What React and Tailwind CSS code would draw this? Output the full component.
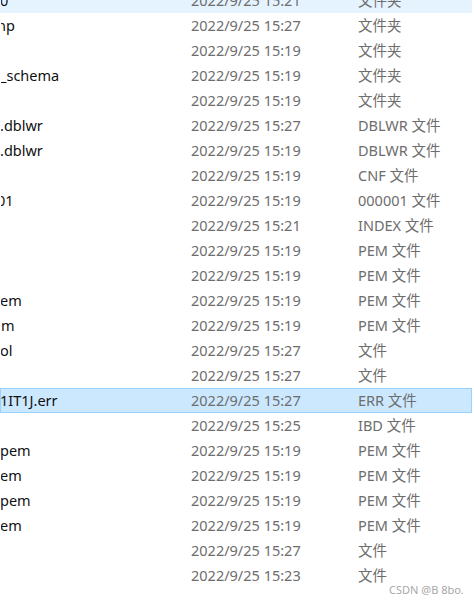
const rows = [
    { name: "0", time: "15:21", type: "文件夹", hover: true },
    { name: "np", time: "15:27", type: "文件夹", shift: true },
    { name: "", time: "15:19", type: "文件夹" },
    { name: "_schema", time: "15:19", type: "文件夹" },
    { name: "", time: "15:19", type: "文件夹" },
    { name: ".dblwr", time: "15:27", type: "DBLWR 文件" },
    { name: ".dblwr", time: "15:19", type: "DBLWR 文件" },
    { name: "", time: "15:19", type: "CNF 文件" },
    { name: "01", time: "15:19", type: "000001 文件", shift: true },
    { name: "", time: "15:21", type: "INDEX 文件" },
    { name: "", time: "15:19", type: "PEM 文件" },
    { name: "", time: "15:19", type: "PEM 文件" },
    { name: "em", time: "15:19", type: "PEM 文件" },
    { name: "m", time: "15:19", type: "PEM 文件", indent: true },
    { name: "ol", time: "15:27", type: "文件" },
    { name: "", time: "15:27", type: "文件" },
    { name: "1IT1J.err", time: "15:27", type: "ERR 文件", selected: true },
    { name: "", time: "15:25", type: "IBD 文件" },
    { name: "pem", time: "15:19", type: "PEM 文件" },
    { name: "em", time: "15:19", type: "PEM 文件" },
    { name: "pem", time: "15:19", type: "PEM 文件" },
    { name: "em", time: "15:19", type: "PEM 文件" },
    { name: "", time: "15:27", type: "文件" },
    { name: "", time: "15:23", type: "文件" },
];

const FileRow = ({ name, time, type, hover, selected, shift, indent }) => {
    let rowClass = "flex items-center h-[25px] w-[472px] pt-px border border-transparent";
    if (hover) rowClass = "flex items-center h-[25px] w-[472px] pt-px border border-transparent bg-[#e5f3ff]";
    if (selected) rowClass = "flex items-center h-[25px] w-[472px] pt-px border border-[#99d1ff] bg-[#cce8ff]";

    return (
        <div className={rowClass}>
            <div className="w-[190px] overflow-hidden whitespace-nowrap text-[14.5px] text-[#111]">
                <span className={shift ? "-ml-[4px] inline-block" : indent ? "ml-0 inline-block" : "-ml-[1px] inline-block"}>
                    {name}
                </span>
            </div>
            <div className="w-[167px] whitespace-nowrap text-[14.5px] text-[#6d6d6d]">
                2022/9/25 {time}
            </div>
            <div className="whitespace-nowrap text-[14.5px] text-[#6d6d6d]">{type}</div>
        </div>
    );
};

export default function App() {
    return (
        <div
            className="relative w-[474px] h-[604px] overflow-hidden bg-white"
            style={{ fontFamily: '"Noto Sans", "Noto Sans CJK SC", sans-serif' }}
        >
            <div className="flex flex-col -mt-[12px]">
                {rows.map((row, index) => (
                    <FileRow key={index} {...row} />
                ))}
            </div>
            <div className="absolute left-[389px] top-[582px] text-[11px] text-[#a8a8a8] whitespace-nowrap">
                CSDN @B 8bo.
            </div>
        </div>
    );
}
